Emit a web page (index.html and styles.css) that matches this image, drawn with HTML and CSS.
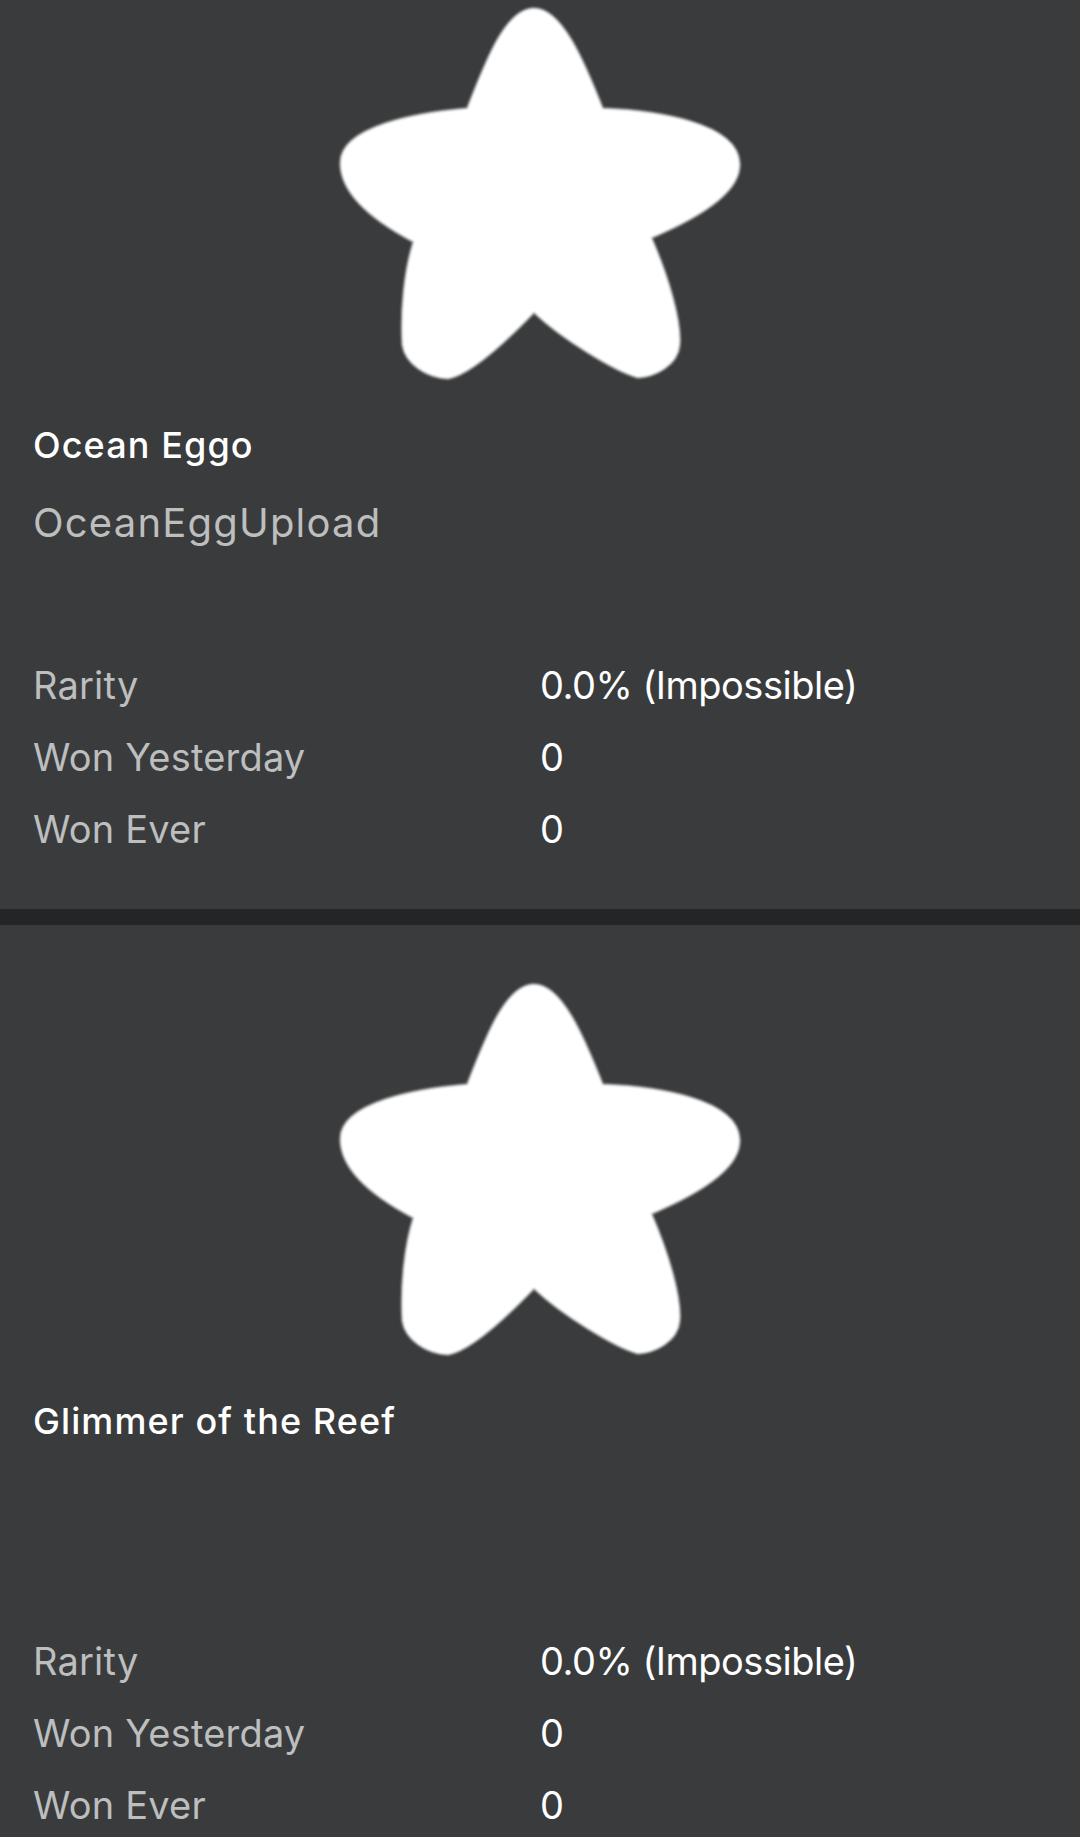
FILE: index.html
```html
<!DOCTYPE html>
<html lang="en">
<head>
    <meta charset="UTF-8">
    <meta name="viewport" content="width=device-width, initial-scale=1.0">
    <title>Badges</title>
    <link rel="stylesheet" href="styles.css">
</head>
<body>
    <svg class="defs" width="0" height="0">
        <symbol id="badge-star" viewBox="330 -11 420 420">
            <path fill="#fff" stroke="#a9aaab" stroke-width="1.5" d="M467 108
                C485 62 505 8 534 8
                C562 8 584 60 603 108
                C655 110 738 122 740 163
                C742 195 690 222 652 238
                C668 275 682 320 680 345
                C678 366 655 377 638 378
                C615 372 560 338 534 313
                C508 340 472 375 448 379
                C426 378 405 364 402 345
                C400 310 404 270 413 242
                C375 222 340 195 340 163
                C340 125 420 112 467 108 Z"/>
        </symbol>
    </svg>

    <div class="badge-list">
        <div class="badge-card">
            <svg class="badge-thumb"><use href="#badge-star"></use></svg>
            <h3 class="badge-name">Ocean Eggo</h3>
            <p class="badge-desc">OceanEggUpload</p>
            <div class="badge-stats">
                <div class="stat-label">Rarity</div>
                <div class="stat-value">0.0% (Impossible)</div>
                <div class="stat-label">Won Yesterday</div>
                <div class="stat-value">0</div>
                <div class="stat-label">Won Ever</div>
                <div class="stat-value">0</div>
            </div>
        </div>
        <div class="badge-card">
            <svg class="badge-thumb"><use href="#badge-star"></use></svg>
            <h3 class="badge-name">Glimmer of the Reef</h3>
            <p class="badge-desc"></p>
            <div class="badge-stats">
                <div class="stat-label">Rarity</div>
                <div class="stat-value">0.0% (Impossible)</div>
                <div class="stat-label">Won Yesterday</div>
                <div class="stat-value">0</div>
                <div class="stat-label">Won Ever</div>
                <div class="stat-value">0</div>
            </div>
        </div>
    </div>
</body>
</html>
```

FILE: styles.css
```css
body {
    margin: 0;
    background-color: #393b3d;
    color: #fff;
    font-family: Inter, "Noto Sans", sans-serif;
}

.defs {
    position: absolute;
}

/* page is scrolled a little, first card starts above the fold */
.badge-list {
    display: flex;
    flex-direction: column;
    gap: 16px;
    margin-top: -51px;
    background-color: #232527;
}

.badge-card {
    background-color: #393b3d;
    padding: 40px 33px 44px;
}

.badge-thumb {
    display: block;
    width: 420px;
    height: 420px;
    margin: 0 auto;
    filter: blur(0.9px);
}

.badge-name {
    margin: 14px 0 0;
    font-size: 36px;
    font-weight: 500;
    line-height: 44px;
    letter-spacing: 1.1px;
}

.badge-desc {
    margin: 32px 0 0;
    min-height: 48px;
    font-size: 40px;
    font-weight: 400;
    line-height: 48px;
    letter-spacing: 1.2px;
    color: #bdbebe;
}

.badge-stats {
    display: grid;
    grid-template-columns: 1fr 1fr;
    margin-top: 102px;
    font-size: 38px;
    line-height: 72px;
}

.stat-label {
    color: #bdbebe;
    letter-spacing: 0.2px;
}

.stat-value {
    color: #fff;
    letter-spacing: -0.5px;
}
```
